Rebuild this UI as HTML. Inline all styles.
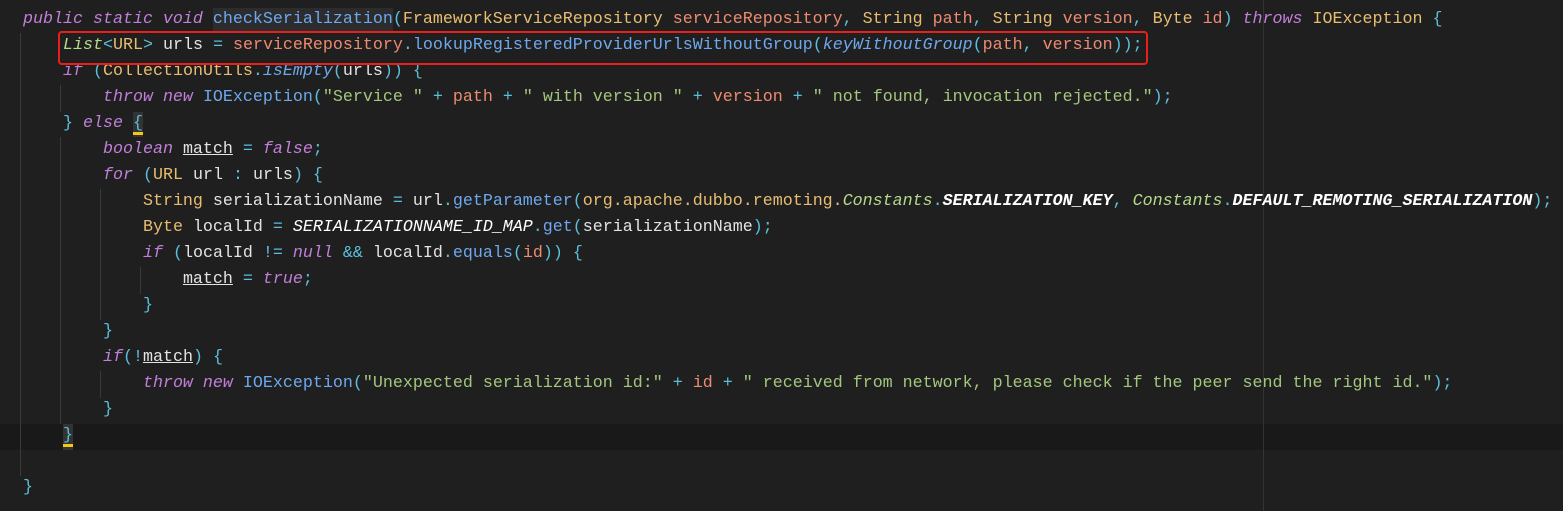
<!DOCTYPE html>
<html><head><meta charset="utf-8"><style>
html,body{margin:0;padding:0;background:#1f1f1f;width:1563px;height:511px;overflow:hidden;position:relative}
.c{position:absolute;left:23px;top:7px;font-family:"Liberation Mono",monospace;font-size:16.67px;color:#e3e3e3;white-space:normal}
.l{height:26px;line-height:26px;white-space:pre}
.k{color:#c27fd9;font-style:italic}
.f{color:#6ea8ec}
.t{color:#e8bd72}
.p{color:#ee8a70}
.s{color:#a3c77d}
.o{color:#5bbfdc}
.g{color:#b5d98a;font-style:italic}
.cn{color:#fff;font-style:italic;font-weight:bold}
.ci{color:#fff;font-style:italic}
.u{text-decoration:underline}
.gd{position:absolute;width:1px;background:#3a3a3a}
</style></head><body>
<div style="position:absolute;left:0;top:424px;width:1563px;height:26px;background:#191919"></div>
<div style="position:absolute;left:213px;top:8px;width:180px;height:25px;background:#2c2c2e"></div>
<div style="position:absolute;left:1263px;top:0;width:1px;height:511px;background:#333"></div>
<div class="gd" style="left:20px;top:33px;height:443px"></div>
<div class="gd" style="left:60px;top:85px;height:27px"></div>
<div class="gd" style="left:60px;top:137px;height:287px"></div>
<div class="gd" style="left:100px;top:189px;height:131px"></div>
<div class="gd" style="left:140px;top:267px;height:27px"></div>
<div class="gd" style="left:100px;top:371px;height:27px"></div>
<div style="position:absolute;left:133px;top:112px;width:10px;height:25px;background:#333"></div>
<div style="position:absolute;left:133px;top:132px;width:10px;height:3px;background:#f5c518"></div>
<div style="position:absolute;left:63px;top:424px;width:10px;height:26px;background:#333"></div>
<div style="position:absolute;left:63px;top:444px;width:10px;height:3px;background:#f5c518"></div>
<div class="c">
<div class="l"><span class="k">public static void</span> <span class="f">checkSerialization</span><span class="o">(</span><span class="t">FrameworkServiceRepository</span> <span class="p">serviceRepository</span><span class="o">,</span> <span class="t">String</span> <span class="p">path</span><span class="o">,</span> <span class="t">String</span> <span class="p">version</span><span class="o">,</span> <span class="t">Byte</span> <span class="p">id</span><span class="o">)</span> <span class="k">throws</span> <span class="t">IOException</span> <span class="o">{</span></div>
<div class="l">    <span class="g">List</span><span class="o">&lt;</span><span class="t">URL</span><span class="o">&gt;</span> urls <span class="o">=</span> <span class="p">serviceRepository</span><span class="o">.</span><span class="f">lookupRegisteredProviderUrlsWithoutGroup</span><span class="o">(</span><span class="f" style="font-style:italic">keyWithoutGroup</span><span class="o">(</span><span class="p">path</span><span class="o">,</span> <span class="p">version</span><span class="o">));</span></div>
<div class="l">    <span class="k">if</span> <span class="o">(</span><span class="t">CollectionUtils</span><span class="o">.</span><span class="f" style="font-style:italic">isEmpty</span><span class="o">(</span>urls<span class="o">)) {</span></div>
<div class="l">        <span class="k">throw new</span> <span class="f">IOException</span><span class="o">(</span><span class="s">"Service "</span> <span class="o">+</span> <span class="p">path</span> <span class="o">+</span> <span class="s">" with version "</span> <span class="o">+</span> <span class="p">version</span> <span class="o">+</span> <span class="s">" not found, invocation rejected."</span><span class="o">);</span></div>
<div class="l">    <span class="o">}</span> <span class="k">else</span> <span class="o">{</span></div>
<div class="l">        <span class="k">boolean</span> <span class="u">match</span> <span class="o">=</span> <span class="k">false</span><span class="o">;</span></div>
<div class="l">        <span class="k">for</span> <span class="o">(</span><span class="t">URL</span> url <span class="o">:</span> urls<span class="o">) {</span></div>
<div class="l">            <span class="t">String</span> serializationName <span class="o">=</span> url<span class="o">.</span><span class="f">getParameter</span><span class="o">(</span><span class="t">org.apache.dubbo.remoting.</span><span class="g">Constants</span><span class="o">.</span><span class="cn">SERIALIZATION_KEY</span><span class="o">,</span> <span class="g">Constants</span><span class="o">.</span><span class="cn">DEFAULT_REMOTING_SERIALIZATION</span><span class="o">);</span></div>
<div class="l">            <span class="t">Byte</span> localId <span class="o">=</span> <span class="ci">SERIALIZATIONNAME_ID_MAP</span><span class="o">.</span><span class="f">get</span><span class="o">(</span>serializationName<span class="o">);</span></div>
<div class="l">            <span class="k">if</span> <span class="o">(</span>localId <span class="o">!=</span> <span class="k">null</span> <span class="o">&amp;&amp;</span> localId<span class="o">.</span><span class="f">equals</span><span class="o">(</span><span class="p">id</span><span class="o">)) {</span></div>
<div class="l">                <span class="u">match</span> <span class="o">=</span> <span class="k">true</span><span class="o">;</span></div>
<div class="l">            <span class="o">}</span></div>
<div class="l">        <span class="o">}</span></div>
<div class="l">        <span class="k">if</span><span class="o">(!</span><span class="u">match</span><span class="o">) {</span></div>
<div class="l">            <span class="k">throw new</span> <span class="f">IOException</span><span class="o">(</span><span class="s">"Unexpected serialization id:"</span> <span class="o">+</span> <span class="p">id</span> <span class="o">+</span> <span class="s">" received from network, please check if the peer send the right id."</span><span class="o">);</span></div>
<div class="l">        <span class="o">}</span></div>
<div class="l">    <span class="o">}</span></div>
<div class="l"> </div>
<div class="l"><span class="o">}</span></div>
</div>
<div style="position:absolute;left:58px;top:31px;width:1086px;height:30px;border:2px solid #e8201c;border-radius:4px"></div>
</body></html>
